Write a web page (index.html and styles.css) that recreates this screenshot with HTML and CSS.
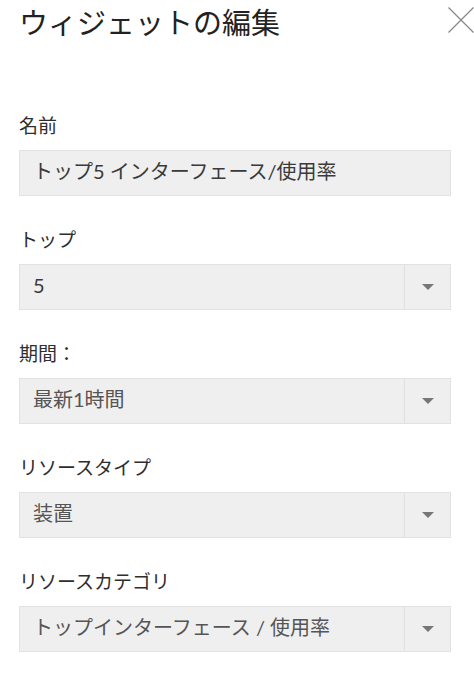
FILE: index.html
```html
<html lang="ja">
  <head>
    <meta charset="UTF-8" />
    <meta name="viewport" content="width=device-width, initial-scale=1.0" />
    <title>ウィジェットの編集</title>
    <link rel="stylesheet" href="styles.css">
  </head>
  <body>
    <div class="panel">
      <div class="header">
        <h1 class="title">ウィジェットの編集</h1>
        <button class="close" aria-label="閉じる">
          <svg width="26" height="26" viewBox="0 0 26 26">
            <path d="M0.5 0.5 L25.5 25.5 M25.5 0.5 L0.5 25.5" stroke="#8a8a8a" stroke-width="1.3" fill="none" />
          </svg>
        </button>
      </div>

      <div class="field">
        <div class="label">名前</div>
        <div class="box">
          <span class="value">トップ5 インターフェース/使用率</span>
        </div>
      </div>

      <div class="field">
        <div class="label">トップ</div>
        <div class="box select">
          <span class="value">5</span>
          <span class="arrow"></span>
        </div>
      </div>

      <div class="field">
        <div class="label">期間：</div>
        <div class="box select">
          <span class="value muted">最新1時間</span>
          <span class="arrow"></span>
        </div>
      </div>

      <div class="field">
        <div class="label">リソースタイプ</div>
        <div class="box select">
          <span class="value muted">装置</span>
          <span class="arrow"></span>
        </div>
      </div>

      <div class="field">
        <div class="label">リソースカテゴリ</div>
        <div class="box select">
          <span class="value muted">トップインターフェース / 使用率</span>
          <span class="arrow"></span>
        </div>
      </div>
    </div>
  </body>
</html>
```

FILE: styles.css
```css
body {
  margin: 0;
  background: #ffffff;
  font-family: "Lato", "Noto Sans CJK JP", sans-serif;
  color: #2b2b2b;
}

.panel {
  padding-left: 19px;
  padding-right: 23px;
}

.header {
  display: flex;
  justify-content: space-between;
  align-items: flex-start;
  height: 114px;
  margin-right: -23px;
}

.title {
  margin: 0;
  margin-top: 3px;
  font-size: 29px;
  font-weight: 400;
  line-height: 40px;
  color: #222222;
}

.close {
  border: none;
  background: none;
  padding: 0;
  margin-top: 7px;
  width: 26px;
  height: 26px;
  cursor: pointer;
}

.field {
  margin-bottom: 32px;
}

.label {
  font-size: 19px;
  line-height: 24px;
  height: 24px;
  margin-bottom: 12px;
  color: #2e2e2e;
}

.box {
  display: flex;
  align-items: center;
  height: 46px;
  box-sizing: border-box;
  background: #efefef;
  border: 1px solid #e2e2e2;
  padding-left: 13px;
}

.value {
  flex: 1;
  font-size: 20px;
  line-height: 26px;
  margin-bottom: 4px;
  color: #3a3a3a;
}

.value.muted {
  color: #555555;
}

.arrow {
  width: 45px;
  height: 100%;
  border-left: 1px solid #e0e0e0;
  display: flex;
  align-items: center;
  justify-content: center;
}

.arrow::after {
  content: "";
  border-left: 6px solid transparent;
  border-right: 6px solid transparent;
  border-top: 6px solid #777777;
}
```
